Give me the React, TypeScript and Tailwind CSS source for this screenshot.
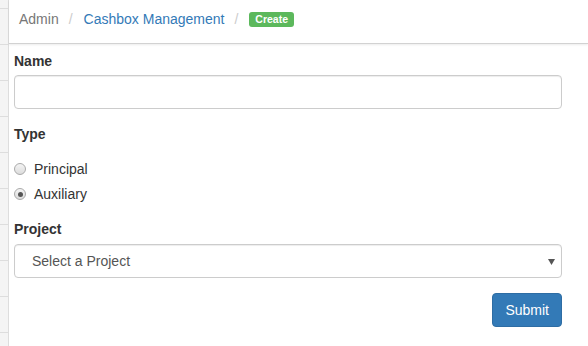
export default function App() {
  const rows = Array.from({ length: 10 });

  return (
    <div className="flex h-[346px] w-[588px] overflow-hidden bg-white text-[14px] text-[#333] font-['Liberation_Sans',Arial,sans-serif]">
      {/* Left sidebar strip */}
      <div className="w-[9px] shrink-0 border-r border-[#ddd] bg-[#f4f4f4]">
        <div className="h-[8px]" />
        {rows.map((_, i) => (
          <div key={i} className="h-[36px] border-t border-[#ddd]" />
        ))}
      </div>

      <div className="flex-1">
        {/* Breadcrumb */}
        <div className="flex h-[44px] items-center border-b border-[#d2d2d2] pb-[4px] pl-[10px] shadow-[0_1px_2px_rgba(0,0,0,0.08)]">
          <span className="text-[#777]">Admin</span>
          <span className="px-[10px] text-[#ccc]">/</span>
          <span className="ml-[1px] text-[#337ab7]">Cashbox Management</span>
          <span className="px-[10px] text-[#ccc]">/</span>
          <span className="ml-[1px] rounded-[3px] bg-[#5cb85c] px-[6px] pt-[2px] pb-[3px] text-[10.5px] font-bold leading-none text-white">Create</span>
        </div>

        {/* Form */}
        <div className="px-[5px] pr-[26px] pt-[7px]">
          <label className="block font-bold leading-[20px]">Name</label>
          <input className="mt-[4px] block h-[34px] w-full rounded-[4px] border border-[#ccc] px-3 shadow-[inset_0_1px_1px_rgba(0,0,0,0.075)] outline-none" />

          <label className="mt-[15px] block font-bold leading-[20px]">Type</label>
          <div className="mt-[15px] flex flex-col gap-[5px]">
            <label className="flex h-[20px] items-center gap-[8px]">
              <span className="h-[12px] w-[12px] rounded-full border border-[#aaa] bg-gradient-to-b from-[#f4f4f4] to-[#dcdcdc]" />
              <span>Principal</span>
            </label>
            <label className="flex h-[20px] items-center gap-[8px]">
              <span className="flex h-[12px] w-[12px] items-center justify-center rounded-full border border-[#aaa] bg-gradient-to-b from-[#f4f4f4] to-[#dcdcdc]">
                <span className="h-[5px] w-[5px] rounded-full bg-[#555]" />
              </span>
              <span>Auxiliary</span>
            </label>
          </div>

          <label className="mt-[15px] block font-bold leading-[20px]">Project</label>
          <div className="mt-[5px] flex h-[34px] w-full items-center justify-between rounded-[4px] border border-[#ccc] pl-[17px] pr-[6px] shadow-[inset_0_1px_1px_rgba(0,0,0,0.075)]">
            <span className="text-[#555]">Select a Project</span>
            <svg width="7" height="6" viewBox="0 0 7 6" className="mt-[2px]">
              <path d="M0 0h7L3.5 6z" fill="#555" />
            </svg>
          </div>

          <div className="mt-[15px] flex justify-end">
            <button className="h-[34px] rounded-[4px] border border-[#2e6da4] bg-[#337ab7] px-[12px] text-white">Submit</button>
          </div>
        </div>
      </div>
    </div>
  );
}
